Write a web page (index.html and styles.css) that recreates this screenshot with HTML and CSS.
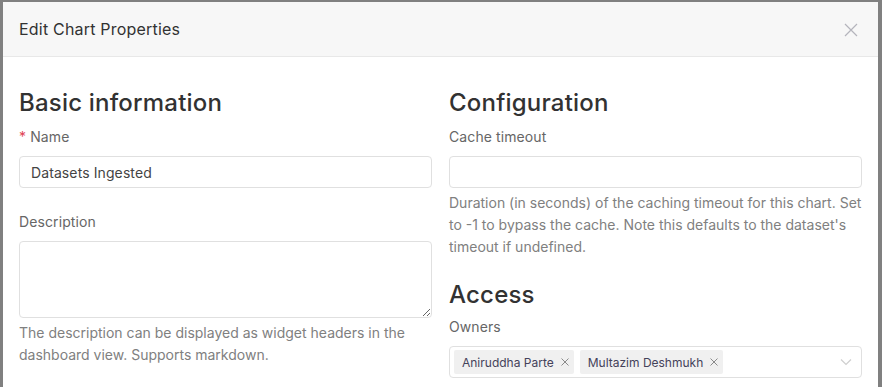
FILE: index.html
```html
<!DOCTYPE html>
<html lang="en">
<head>
<meta charset="utf-8">
<title>Edit Chart Properties</title>
<link rel="stylesheet" href="styles.css">
</head>
<body>
<div class="backdrop">
  <div class="modal">
    <div class="modal-header">
      <div class="modal-title">Edit Chart Properties</div>
      <button class="close" aria-label="Close">
        <svg width="14" height="14" viewBox="0 0 14 14"><path d="M1 1L13 13M13 1L1 13" stroke="#b4b4bc" stroke-width="1.2" fill="none"/></svg>
      </button>
    </div>
    <div class="modal-body">
      <div class="col">
        <h3 class="section-title">Basic information</h3>
        <div class="form-item">
          <label class="label"><span class="req">*</span> Name</label>
          <input class="input" type="text" value="Datasets Ingested">
        </div>
        <div class="form-item last">
          <label class="label">Description</label>
          <textarea class="textarea"></textarea>
          <div class="help">The description can be displayed as widget headers in the dashboard view. Supports markdown.</div>
        </div>
      </div>
      <div class="col">
        <h3 class="section-title">Configuration</h3>
        <div class="form-item">
          <label class="label">Cache timeout</label>
          <input class="input" type="text" value="">
          <div class="help">Duration (in seconds) of the caching timeout for this chart. Set to -1 to bypass the cache. Note this defaults to the dataset's timeout if undefined.</div>
        </div>
        <h3 class="section-title access">Access</h3>
        <div class="form-item last">
          <label class="label">Owners</label>
          <div class="select">
            <span class="tag">Aniruddha Parte <svg class="tag-x" width="8" height="8" viewBox="0 0 8 8"><path d="M0.5 0.5L7.5 7.5M7.5 0.5L0.5 7.5" stroke="#8a8a8a" stroke-width="1" fill="none"/></svg></span>
            <span class="tag">Multazim Deshmukh <svg class="tag-x" width="8" height="8" viewBox="0 0 8 8"><path d="M0.5 0.5L7.5 7.5M7.5 0.5L0.5 7.5" stroke="#8a8a8a" stroke-width="1" fill="none"/></svg></span>
            <svg class="chevron" width="12" height="8" viewBox="0 0 12 8"><path d="M1 1.5L6 6.5L11 1.5" stroke="#cfcfcf" stroke-width="1.2" fill="none"/></svg>
          </div>
        </div>
      </div>
    </div>
  </div>
</div>
</body>
</html>
```
FILE: styles.css
```css
html, body {
  margin: 0;
  padding: 0;
  height: 100%;
  overflow: hidden;
}
body {
  font-family: Inter, "Noto Sans", sans-serif;
  background: #808080;
}
.backdrop {
  padding: 2px 4px 0 3px;
  height: 100%;
  box-sizing: border-box;
}
.modal {
  background: #fff;
  height: 100%;
}
.modal-header {
  height: 54px;
  background: #f7f7f7;
  border-bottom: 1px solid #e8e8e8;
  display: flex;
  align-items: center;
  justify-content: space-between;
  padding: 0 19px 0 16px;
}
.modal-title {
  font-size: 16px;
  color: #323232;
  font-weight: 400;
  letter-spacing: 0.2px;
}
.close {
  background: none;
  border: 0;
  padding: 0;
  width: 16px;
  height: 16px;
  display: flex;
  align-items: center;
  justify-content: center;
  margin-top: 2px;
}
.modal-body {
  display: grid;
  grid-template-columns: 413px 413px;
  column-gap: 17px;
  padding: 30px 16px 0 16px;
}
.col {
  display: flex;
  flex-direction: column;
}
.section-title {
  margin: 0 0 7px 0;
  font-size: 24px;
  line-height: 32px;
  font-weight: 500;
  color: #323232;
  letter-spacing: 0.2px;
}
.section-title.access {
  margin-top: -2px;
  margin-bottom: 5px;
}
.form-item {
  display: flex;
  flex-direction: column;
  margin-bottom: 23px;
}
.form-item.last {
  margin-bottom: 0;
}
.label {
  font-size: 14px;
  line-height: 22px;
  color: #666;
  padding-bottom: 8px;
  letter-spacing: 0.1px;
}
.req {
  color: #e04355;
}
.input {
  box-sizing: border-box;
  height: 32px;
  width: 100%;
  border: 1px solid #e0e0e0;
  border-radius: 4px;
  padding: 0 11px;
  font-family: inherit;
  font-size: 14px;
  color: #444;
  outline: none;
  margin: 0;
  letter-spacing: 0.1px;
}
.textarea {
  box-sizing: border-box;
  height: 77px;
  width: 100%;
  border: 1px solid #e0e0e0;
  border-radius: 4px;
  padding: 4px 11px;
  font-family: inherit;
  font-size: 14px;
  resize: vertical;
  outline: none;
  margin: 0;
  display: block;
}
.help {
  font-size: 14px;
  line-height: 22px;
  color: #808080;
  margin-top: 4px;
}
.select {
  box-sizing: border-box;
  height: 32px;
  border: 1px solid #e0e0e0;
  border-radius: 4px;
  display: flex;
  align-items: center;
  padding: 0 4px;
  gap: 6px;
}
.tag {
  height: 24px;
  box-sizing: border-box;
  background: #f0f0f0;
  border-radius: 2px;
  padding: 0 5px 0 8px;
  display: inline-flex;
  align-items: center;
  font-size: 12px;
  color: #44425a;
  gap: 7px;
}
.tag-x {
  display: block;
}
.chevron {
  margin-left: auto;
  margin-right: 5px;
}
```
